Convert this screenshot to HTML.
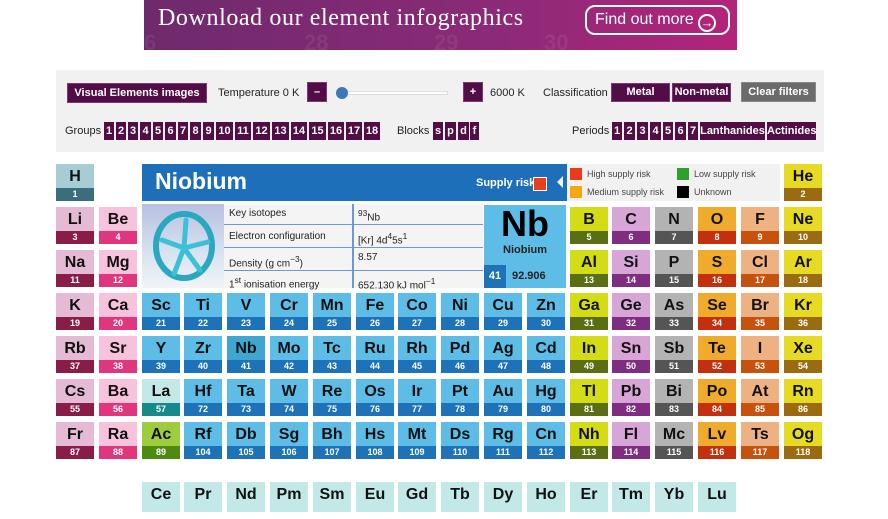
<!DOCTYPE html>
<html><head><meta charset="utf-8"><style>
*{margin:0;padding:0;box-sizing:border-box}
body{width:888px;height:500px;overflow:hidden;background:#fff;font-family:"Liberation Sans",sans-serif;position:relative}
.abs{position:absolute}
.banner{left:144px;top:0;width:593px;height:50px;background:linear-gradient(90deg,#6e2a6c,#8c2a78 60%,#b3247a);overflow:hidden}
.banner .t{left:14px;top:5px;color:#fff;font-family:"Liberation Serif",serif;font-size:24px;letter-spacing:0.6px;white-space:nowrap}
.banner .btn{left:441px;top:5px;width:145px;height:30px;border:2px solid #fff;border-radius:10px;color:#fff;font-size:16px;line-height:26px;padding-left:8px}
.banner .bg{color:rgba(255,255,255,.07);font-size:22px;font-weight:bold;top:30px}
.ctl{left:56px;top:70px;width:768px;height:82px;background:#f1f1f1}
.pb{position:absolute;background:#520c46;color:#fff;font-weight:bold;font-size:11px;text-align:center;border:1px solid #7a3a70}
.lbl{position:absolute;font-size:11px;color:#222}
.sq{position:absolute;top:122px;height:18px;background:#520c46;color:#fff;font-weight:bold;font-size:11px;line-height:18px;text-align:center}
.c{position:absolute;width:38px;height:37px;text-align:center;font-weight:bold}
.c b{display:block;height:24px;line-height:25px;font-size:16px;color:#111}
.c i{display:block;height:13px;line-height:13px;font-size:9px;color:#fff;font-style:normal}
.h b{background:#a7cdd4}.h i{background:#3b6e7c}
.a b{background:#e5bad4}.a i{background:#8a1c48}
.e b{background:#f6c2dc}.e i{background:#df367d}
.t b{background:#5dbde6}.t i{background:#1d72b8}
.l b{background:#c2e8e8}.l i{background:#16898a}
.x b{background:#9fcb3e}.x i{background:#4c8a10}
.g b{background:#d3dc14}.g i{background:#5a6e14}
.p b{background:#d7a6d6}.p i{background:#7e2d80}
.n b{background:#b3b3b3}.n i{background:#555}
.o b{background:#f0aa2c}.o i{background:#c2300e}
.f b{background:#eeb181}.f i{background:#c6520e}
.z b{background:#e6da22}.z i{background:#9b6b12}
.ln b{background:#c2e8e8;height:30px}
</style></head><body>
<div class="abs banner">
<div class="abs bg" style="left:0">6</div><div class="abs bg" style="left:160px">28</div><div class="abs bg" style="left:290px">29</div><div class="abs bg" style="left:400px">30</div>
<div class="abs t">Download our element infographics</div>
<div class="abs btn">Find out more <span style="display:inline-block;width:18px;height:18px;border:2px solid #fff;border-radius:50%;vertical-align:-3px;text-align:center;line-height:13px;font-size:13px">→</span></div>
</div>
<div class="abs ctl"></div>
<div class="pb" style="left:67px;top:83px;width:140px;height:20px;line-height:18px">Visual Elements images</div>
<div class="lbl" style="left:218px;top:87px">Temperature 0 K</div>
<div class="pb" style="left:307px;top:82px;width:20px;height:20px;line-height:18px">–</div>
<div class="abs" style="left:338px;top:91px;width:110px;height:4px;background:#fff;border:1px solid #ddd"></div>
<div class="abs" style="left:336px;top:87px;width:12px;height:12px;border-radius:50%;background:#3a78b8"></div>
<div class="pb" style="left:463px;top:82px;width:20px;height:20px;line-height:18px">+</div>
<div class="lbl" style="left:490px;top:87px">6000 K</div>
<div class="lbl" style="left:543px;top:87px">Classification</div>
<div class="pb" style="left:611px;top:83px;width:59px;height:19px;line-height:17px">Metal</div>
<div class="pb" style="left:672px;top:83px;width:59px;height:19px;line-height:17px">Non-metal</div>
<div class="pb" style="left:741px;top:82px;width:75px;height:20px;line-height:18px;background:#6b6b6b;border-color:#888">Clear filters</div>
<div class="lbl" style="left:65px;top:125px">Groups</div>
<div class="sq" style="left:104px;width:10px">1</div><div class="sq" style="left:116px;width:10px">2</div><div class="sq" style="left:128px;width:10px">3</div><div class="sq" style="left:140px;width:11px">4</div><div class="sq" style="left:153px;width:10px">5</div><div class="sq" style="left:165px;width:11px">6</div><div class="sq" style="left:178px;width:10px">7</div><div class="sq" style="left:190px;width:11px">8</div><div class="sq" style="left:203px;width:11px">9</div><div class="sq" style="left:216px;width:17px">10</div><div class="sq" style="left:235px;width:16px">11</div><div class="sq" style="left:253px;width:17px">12</div><div class="sq" style="left:272px;width:17px">13</div><div class="sq" style="left:291px;width:16px">14</div><div class="sq" style="left:309px;width:17px">15</div><div class="sq" style="left:328px;width:16px">16</div><div class="sq" style="left:346px;width:16px">17</div><div class="sq" style="left:364px;width:16px">18</div>
<div class="lbl" style="left:397px;top:125px">Blocks</div>
<div class="sq" style="left:433px;width:10px">s</div><div class="sq" style="left:445px;width:11px">p</div><div class="sq" style="left:458px;width:11px">d</div><div class="sq" style="left:470px;width:9px">f</div>
<div class="lbl" style="left:572px;top:125px">Periods</div>
<div class="sq" style="left:612px;width:10px">1</div><div class="sq" style="left:624px;width:11px">2</div><div class="sq" style="left:637px;width:11px">3</div><div class="sq" style="left:650px;width:11px">4</div><div class="sq" style="left:663px;width:10px">5</div><div class="sq" style="left:675px;width:11px">6</div><div class="sq" style="left:688px;width:10px">7</div><div class="sq" style="left:700px;width:65px">Lanthanides</div><div class="sq" style="left:767px;width:49px">Actinides</div>

<div class="abs" style="left:142px;top:164px;width:425px;height:37px;background:#1c6fb8"></div>
<div class="abs" style="left:155px;top:168px;color:#fff;font-size:23px;font-weight:bold">Niobium</div>
<div class="abs" style="left:476px;top:177px;color:#fff;font-size:11px;font-weight:bold">Supply risk</div>
<div class="abs" style="left:533px;top:177px;width:14px;height:14px;background:#e8401c;border:1px solid #fff"></div>
<div class="abs" style="left:567px;top:164px;width:213px;height:37px;background:#f1f1f1"></div>
<div class="abs" style="left:557px;top:176px;width:0;height:0;border:6px solid transparent;border-right-color:#f1f1f1;border-left:0"></div>
<div class="abs" style="left:570px;top:168px;width:12px;height:12px;background:#ea3a18"></div><div class="lbl" style="left:587px;top:169px;font-size:9px;color:#444">High supply risk</div>
<div class="abs" style="left:570px;top:186px;width:12px;height:12px;background:#f4a814"></div><div class="lbl" style="left:587px;top:187px;font-size:9px;color:#444">Medium supply risk</div>
<div class="abs" style="left:677px;top:168px;width:12px;height:12px;background:#2ea02c"></div><div class="lbl" style="left:694px;top:169px;font-size:9px;color:#444">Low supply risk</div>
<div class="abs" style="left:677px;top:186px;width:12px;height:12px;background:#000"></div><div class="lbl" style="left:694px;top:187px;font-size:9px;color:#444">Unknown</div>

<div class="abs" style="left:142px;top:204px;width:82px;height:84px;background:linear-gradient(#b8c0e0,#d8e4f0 60%,#f0f4f8)">
<svg width="82" height="84" viewBox="0 0 82 84"><ellipse cx="42" cy="42" rx="28" ry="32" fill="none" stroke="#2aa8c0" stroke-width="6"/><g stroke="#3cc0d8" stroke-width="5" stroke-linecap="round"><line x1="42" y1="44" x2="44" y2="16"/><line x1="42" y1="44" x2="66" y2="38"/><line x1="42" y1="44" x2="58" y2="66"/><line x1="42" y1="44" x2="32" y2="70"/><line x1="42" y1="44" x2="20" y2="36"/></g></svg></div>
<div class="abs" style="left:224px;top:204px;width:259px;height:84px;background:#f4f4f4;font-size:10px;color:#222"></div>
<div class="abs" style="left:352px;top:204px;width:2px;height:84px;background:#6a9ad0"></div>
<div class="abs" style="left:224px;top:224px;width:259px;height:1px;background:#6a9ad0"></div>
<div class="abs" style="left:224px;top:247px;width:259px;height:1px;background:#6a9ad0"></div>
<div class="abs" style="left:224px;top:270px;width:259px;height:1px;background:#6a9ad0"></div>
<div class="lbl" style="left:229px;top:208px;font-size:10px">Key isotopes</div>
<div class="lbl" style="left:229px;top:231px;font-size:10px">Electron configuration</div>
<div class="lbl" style="left:229px;top:254px;font-size:10px">Density (g cm<sup>−3</sup>)</div>
<div class="lbl" style="left:229px;top:275px;font-size:10px">1<sup>st</sup> ionisation energy</div>
<div class="lbl" style="left:358px;top:208px;font-size:10px"><sup>93</sup>Nb</div>
<div class="lbl" style="left:358px;top:231px;font-size:10px">[Kr] 4d<sup>4</sup>5s<sup>1</sup></div>
<div class="lbl" style="left:358px;top:252px;font-size:10px">8.57</div>
<div class="lbl" style="left:358px;top:276px;font-size:10px">652.130 kJ mol<sup>−1</sup></div>
<div class="abs" style="left:484px;top:205px;width:82px;height:83px;background:#5dbde6"></div>
<div class="abs" style="left:484px;top:203px;width:82px;text-align:center;font-size:36px;font-weight:bold;color:#000">Nb</div>
<div class="abs" style="left:484px;top:244px;width:82px;text-align:center;font-size:11px;font-weight:bold;color:#222">Niobium</div>
<div class="abs" style="left:484px;top:265px;width:22px;height:23px;background:#1d72b8;color:#fff;font-size:11px;font-weight:bold;text-align:center;line-height:23px">41</div>
<div class="abs" style="left:512px;top:270px;font-size:11px;font-weight:bold;color:#222">92.906</div>

<div class="c h" style="left:56px;top:164px"><b>H</b><i>1</i></div>
<div class="c z" style="left:784px;top:164px"><b>He</b><i>2</i></div>

<div class="c a" style="left:56px;top:207px"><b>Li</b><i>3</i></div><div class="c e" style="left:99px;top:207px"><b>Be</b><i>4</i></div>
<div class="c g" style="left:570px;top:207px"><b>B</b><i>5</i></div><div class="c p" style="left:612px;top:207px"><b>C</b><i>6</i></div><div class="c n" style="left:655px;top:207px"><b>N</b><i>7</i></div><div class="c o" style="left:698px;top:207px"><b>O</b><i>8</i></div><div class="c f" style="left:741px;top:207px"><b>F</b><i>9</i></div><div class="c z" style="left:784px;top:207px"><b>Ne</b><i>10</i></div>

<div class="c a" style="left:56px;top:250px"><b>Na</b><i>11</i></div><div class="c e" style="left:99px;top:250px"><b>Mg</b><i>12</i></div>
<div class="c g" style="left:570px;top:250px"><b>Al</b><i>13</i></div><div class="c p" style="left:612px;top:250px"><b>Si</b><i>14</i></div><div class="c n" style="left:655px;top:250px"><b>P</b><i>15</i></div><div class="c o" style="left:698px;top:250px"><b>S</b><i>16</i></div><div class="c f" style="left:741px;top:250px"><b>Cl</b><i>17</i></div><div class="c z" style="left:784px;top:250px"><b>Ar</b><i>18</i></div>

<div class="c a" style="left:56px;top:293px"><b>K</b><i>19</i></div><div class="c e" style="left:99px;top:293px"><b>Ca</b><i>20</i></div>
<div class="c t" style="left:142px;top:293px"><b>Sc</b><i>21</i></div><div class="c t" style="left:184px;top:293px"><b>Ti</b><i>22</i></div><div class="c t" style="left:227px;top:293px"><b>V</b><i>23</i></div><div class="c t" style="left:270px;top:293px"><b>Cr</b><i>24</i></div><div class="c t" style="left:313px;top:293px"><b>Mn</b><i>25</i></div><div class="c t" style="left:356px;top:293px"><b>Fe</b><i>26</i></div><div class="c t" style="left:398px;top:293px"><b>Co</b><i>27</i></div><div class="c t" style="left:441px;top:293px"><b>Ni</b><i>28</i></div><div class="c t" style="left:484px;top:293px"><b>Cu</b><i>29</i></div><div class="c t" style="left:527px;top:293px"><b>Zn</b><i>30</i></div>
<div class="c g" style="left:570px;top:293px"><b>Ga</b><i>31</i></div><div class="c p" style="left:612px;top:293px"><b>Ge</b><i>32</i></div><div class="c n" style="left:655px;top:293px"><b>As</b><i>33</i></div><div class="c o" style="left:698px;top:293px"><b>Se</b><i>34</i></div><div class="c f" style="left:741px;top:293px"><b>Br</b><i>35</i></div><div class="c z" style="left:784px;top:293px"><b>Kr</b><i>36</i></div>

<div class="c a" style="left:56px;top:336px"><b>Rb</b><i>37</i></div><div class="c e" style="left:99px;top:336px"><b>Sr</b><i>38</i></div>
<div class="c t" style="left:142px;top:336px"><b>Y</b><i>39</i></div><div class="c t" style="left:184px;top:336px"><b>Zr</b><i>40</i></div><div class="c t" style="left:227px;top:336px"><b style="background:#3fa6d2">Nb</b><i>41</i></div><div class="c t" style="left:270px;top:336px"><b>Mo</b><i>42</i></div><div class="c t" style="left:313px;top:336px"><b>Tc</b><i>43</i></div><div class="c t" style="left:356px;top:336px"><b>Ru</b><i>44</i></div><div class="c t" style="left:398px;top:336px"><b>Rh</b><i>45</i></div><div class="c t" style="left:441px;top:336px"><b>Pd</b><i>46</i></div><div class="c t" style="left:484px;top:336px"><b>Ag</b><i>47</i></div><div class="c t" style="left:527px;top:336px"><b>Cd</b><i>48</i></div>
<div class="c g" style="left:570px;top:336px"><b>In</b><i>49</i></div><div class="c p" style="left:612px;top:336px"><b>Sn</b><i>50</i></div><div class="c n" style="left:655px;top:336px"><b>Sb</b><i>51</i></div><div class="c o" style="left:698px;top:336px"><b>Te</b><i>52</i></div><div class="c f" style="left:741px;top:336px"><b>I</b><i>53</i></div><div class="c z" style="left:784px;top:336px"><b>Xe</b><i>54</i></div>

<div class="c a" style="left:56px;top:379px"><b>Cs</b><i>55</i></div><div class="c e" style="left:99px;top:379px"><b>Ba</b><i>56</i></div>
<div class="c l" style="left:142px;top:379px"><b>La</b><i>57</i></div><div class="c t" style="left:184px;top:379px"><b>Hf</b><i>72</i></div><div class="c t" style="left:227px;top:379px"><b>Ta</b><i>73</i></div><div class="c t" style="left:270px;top:379px"><b>W</b><i>74</i></div><div class="c t" style="left:313px;top:379px"><b>Re</b><i>75</i></div><div class="c t" style="left:356px;top:379px"><b>Os</b><i>76</i></div><div class="c t" style="left:398px;top:379px"><b>Ir</b><i>77</i></div><div class="c t" style="left:441px;top:379px"><b>Pt</b><i>78</i></div><div class="c t" style="left:484px;top:379px"><b>Au</b><i>79</i></div><div class="c t" style="left:527px;top:379px"><b>Hg</b><i>80</i></div>
<div class="c g" style="left:570px;top:379px"><b>Tl</b><i>81</i></div><div class="c p" style="left:612px;top:379px"><b>Pb</b><i>82</i></div><div class="c n" style="left:655px;top:379px"><b>Bi</b><i>83</i></div><div class="c o" style="left:698px;top:379px"><b>Po</b><i>84</i></div><div class="c f" style="left:741px;top:379px"><b>At</b><i>85</i></div><div class="c z" style="left:784px;top:379px"><b>Rn</b><i>86</i></div>

<div class="c a" style="left:56px;top:422px"><b>Fr</b><i>87</i></div><div class="c e" style="left:99px;top:422px"><b>Ra</b><i>88</i></div>
<div class="c x" style="left:142px;top:422px"><b>Ac</b><i>89</i></div><div class="c t" style="left:184px;top:422px"><b>Rf</b><i>104</i></div><div class="c t" style="left:227px;top:422px"><b>Db</b><i>105</i></div><div class="c t" style="left:270px;top:422px"><b>Sg</b><i>106</i></div><div class="c t" style="left:313px;top:422px"><b>Bh</b><i>107</i></div><div class="c t" style="left:356px;top:422px"><b>Hs</b><i>108</i></div><div class="c t" style="left:398px;top:422px"><b>Mt</b><i>109</i></div><div class="c t" style="left:441px;top:422px"><b>Ds</b><i>110</i></div><div class="c t" style="left:484px;top:422px"><b>Rg</b><i>111</i></div><div class="c t" style="left:527px;top:422px"><b>Cn</b><i>112</i></div>
<div class="c g" style="left:570px;top:422px"><b>Nh</b><i>113</i></div><div class="c p" style="left:612px;top:422px"><b>Fl</b><i>114</i></div><div class="c n" style="left:655px;top:422px"><b>Mc</b><i>115</i></div><div class="c o" style="left:698px;top:422px"><b>Lv</b><i>116</i></div><div class="c f" style="left:741px;top:422px"><b>Ts</b><i>117</i></div><div class="c z" style="left:784px;top:422px"><b>Og</b><i>118</i></div>

<div class="c ln" style="left:142px;top:482px"><b>Ce</b></div><div class="c ln" style="left:184px;top:482px"><b>Pr</b></div><div class="c ln" style="left:227px;top:482px"><b>Nd</b></div><div class="c ln" style="left:270px;top:482px"><b>Pm</b></div><div class="c ln" style="left:313px;top:482px"><b>Sm</b></div><div class="c ln" style="left:356px;top:482px"><b>Eu</b></div><div class="c ln" style="left:398px;top:482px"><b>Gd</b></div><div class="c ln" style="left:441px;top:482px"><b>Tb</b></div><div class="c ln" style="left:484px;top:482px"><b>Dy</b></div><div class="c ln" style="left:527px;top:482px"><b>Ho</b></div><div class="c ln" style="left:570px;top:482px"><b>Er</b></div><div class="c ln" style="left:612px;top:482px"><b>Tm</b></div><div class="c ln" style="left:655px;top:482px"><b>Yb</b></div><div class="c ln" style="left:698px;top:482px"><b>Lu</b></div>
</body></html>
